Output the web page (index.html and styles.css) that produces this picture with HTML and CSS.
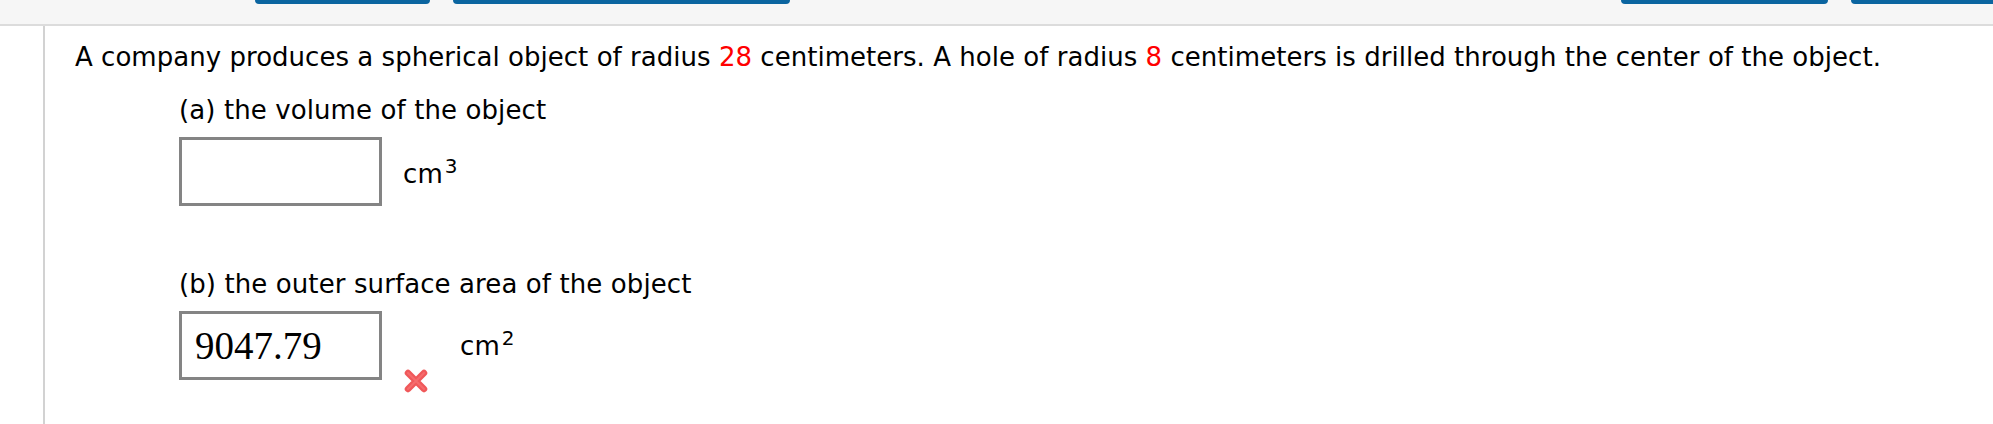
FILE: index.html
```html
<!DOCTYPE html>
<html lang="en">
<head>
<meta charset="utf-8">
<title>Sphere with hole</title>
<link rel="stylesheet" href="styles.css">
</head>
<body>
<header class="topbar">
  <div class="btn-group left">
    <span class="tab-btn w1"></span>
    <span class="tab-btn w2"></span>
  </div>
  <div class="btn-group right">
    <span class="tab-btn w3"></span>
    <span class="tab-btn w4"></span>
  </div>
</header>
<div class="page">
  <div class="gutter"></div>
  <main class="content">
    <p class="question">A company produces a spherical object of radius <span class="var">28</span> centimeters. A hole of radius <span class="var">8</span> centimeters is drilled through the center of the object.</p>
    <div class="part">
      <p class="part-label">(a) the volume of the object</p>
      <div class="answer-row">
        <input class="answer" type="text" value="">
        <span class="unit unit-a">cm<sup class="exp">3</sup></span>
      </div>
    </div>
    <div class="part part-b">
      <p class="part-label">(b) the outer surface area of the object</p>
      <div class="answer-row">
        <input class="answer" type="text" value="9047.79">
        <svg class="wrong" width="26" height="26" viewBox="0 0 26 26" aria-label="incorrect">
          <path d="M5 5 L21 21 M21 5 L5 21" stroke="#f0585a" stroke-width="6.5" stroke-linecap="round" fill="none"/>
          <path d="M5 5 L21 21 M21 5 L5 21" stroke="#f87a7a" stroke-width="2" stroke-linecap="round" fill="none" opacity="0.6"/>
        </svg>
        <span class="unit unit-b">cm<sup class="exp">2</sup></span>
      </div>
    </div>
  </main>
</div>
</body>
</html>
```

FILE: styles.css
```css
html, body {
  margin: 0;
  padding: 0;
  background: #ffffff;
}

body {
  font-family: "DejaVu Sans", Verdana, sans-serif;
  color: #000;
  overflow: hidden;
}

.topbar {
  height: 24px;
  background: #f6f6f6;
  border-bottom: 2px solid #dcdcdc;
  display: flex;
  align-items: flex-start;
  overflow: hidden;
}

.btn-group {
  display: flex;
  gap: 23px;
}

.btn-group.left {
  padding-left: 255px;
}

.btn-group.right {
  margin-left: auto;
  margin-right: -70px;
}

.tab-btn {
  display: block;
  height: 4px;
  background: #0b65a0;
  border-radius: 0 0 6px 6px;
}

.w1 { width: 175px; }
.w2 { width: 337px; }
.w3 { width: 207px; }
.w4 { width: 212px; }

.page {
  display: flex;
  min-height: 398px;
}

.gutter {
  width: 43px;
  flex: none;
  border-right: 2px solid #d2d2d2;
}

.content {
  padding: 15px 0 0 30px;
  font-size: 26px;
  line-height: 32px;
  letter-spacing: 0.1px;
}

.question {
  margin: 0;
  white-space: nowrap;
  letter-spacing: 0.03px;
}

.var {
  color: #ff0000;
}

.part {
  margin: 21px 0 0 104px;
}

.part-b {
  margin-top: 62px;
}

.part-label {
  margin: 0 0 11px;
}

.answer-row {
  display: flex;
  align-items: flex-start;
}

.answer {
  box-sizing: border-box;
  width: 203px;
  height: 69px;
  margin: 0;
  padding: 0 13px;
  border: 3px solid #848484;
  border-radius: 0;
  background: #fff;
  font-family: "Liberation Serif", "Times New Roman", serif;
  font-size: 39px;
  letter-spacing: 0;
  color: #000;
  outline: none;
}

.unit {
  white-space: nowrap;
}

.unit-a {
  margin: 21px 0 0 21px;
}

.unit-b {
  margin: 19px 0 0 31px;
}

.exp {
  font-size: 20px;
  line-height: 0;
  vertical-align: 10px;
  margin-left: 2px;
}

.wrong {
  display: block;
  flex: none;
  margin: 57px 0 0 21px;
}
```
